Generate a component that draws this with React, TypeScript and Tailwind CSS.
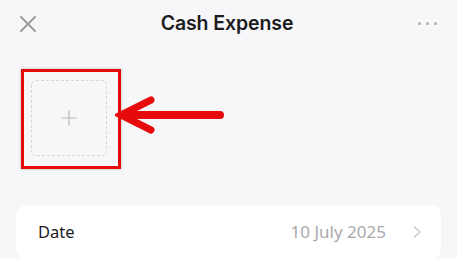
import React from "react";

export default function App() {
  return (
    <div className="relative w-[457px] h-[258px] overflow-hidden bg-[#f7f6f9]">
      {/* Header */}
      <div className="flex h-[46px] items-center justify-between px-5 pt-[1px]">
        <svg width="16" height="16" viewBox="0 0 16 16" className="shrink-0">
          <path d="M1 1 L15 15 M15 1 L1 15" stroke="#9a9a9a" strokeWidth="1.8" strokeLinecap="round" />
        </svg>
        <div className="text-[19.5px] font-semibold tracking-[-0.1px] text-[#1c1c1e]" style={{ fontFamily: "Inter, 'Liberation Sans', sans-serif" }}>
          Cash Expense
        </div>
        <div className="flex items-center gap-[5px]">
          <span className="block h-[3px] w-[3px] rounded-full bg-[#b0b0b0]" />
          <span className="block h-[3px] w-[3px] rounded-full bg-[#b0b0b0]" />
          <span className="block h-[3px] w-[3px] rounded-full bg-[#b0b0b0]" />
        </div>
      </div>

      {/* Upload area */}
      <div className="pl-[31px] pt-[34px]">
        <div className="flex h-[76px] w-[76px] items-center justify-center rounded-[5px] border border-dashed border-[#d6d6d8]">
          <svg width="16" height="16" viewBox="0 0 16 16">
            <path d="M8 0.5 V15.5 M0.5 8 H15.5" stroke="#b8b8ba" strokeWidth="1.2" />
          </svg>
        </div>
      </div>

      {/* Card */}
      <div className="mx-4 mt-[49px] rounded-[10px] bg-white" style={{ fontFamily: "'Noto Sans', 'Open Sans', sans-serif" }}>
        <div className="flex h-[54px] items-center justify-between pl-[22px] pr-[20px]">
          <span className="text-[16.5px] text-[#1c1c1e]">Date</span>
          <div className="flex items-center gap-[27px]">
            <span className="text-[17px] text-[#a9a9ad]">10 July 2025</span>
            <svg width="8" height="12" viewBox="0 0 8 12">
              <path d="M1.5 1 L7 6 L1.5 11" fill="none" stroke="#c4c4c6" strokeWidth="1.3" strokeLinecap="round" strokeLinejoin="round" />
            </svg>
          </div>
        </div>
      </div>

      {/* Annotation overlay: red box */}
      <div className="absolute left-[21px] top-[69px] h-[100px] w-[100px] border-[3px] border-[#e60a0a] shadow-[0_0_3px_rgba(0,0,0,0.25)]" />

      {/* Annotation overlay: arrow */}
      <svg className="absolute left-[115px] top-[92px]" width="112" height="46" viewBox="0 0 112 46">
        <path d="M105 23 H12" stroke="#e60a0a" strokeWidth="8" strokeLinecap="round" />
        <path d="M36 8 L6 23 L36 38" fill="none" stroke="#e60a0a" strokeWidth="7" strokeLinecap="round" strokeLinejoin="miter" />
      </svg>
    </div>
  );
}
